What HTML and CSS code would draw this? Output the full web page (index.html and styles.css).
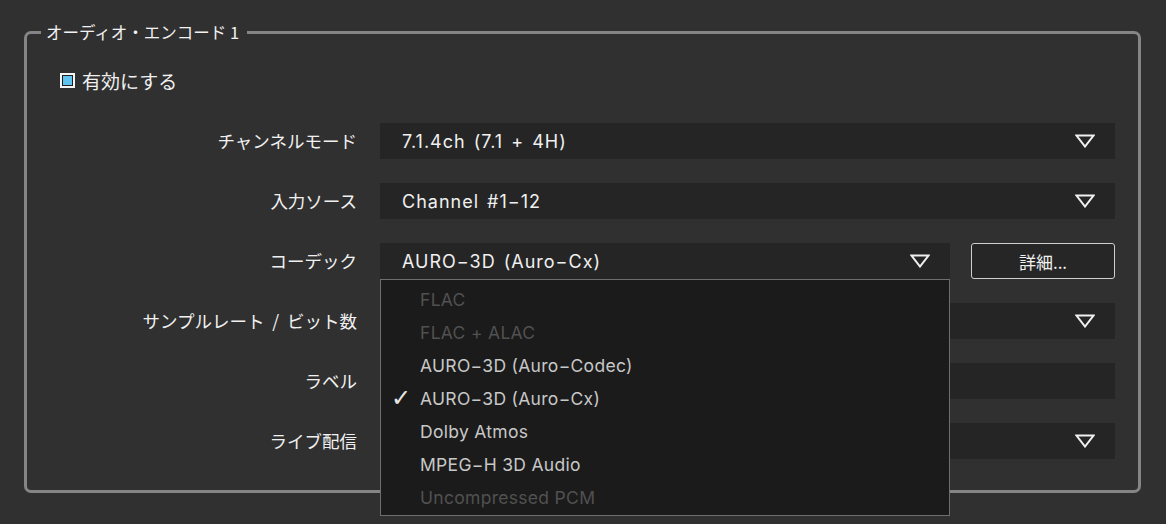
FILE: index.html
```html
<!DOCTYPE html>
<html lang="ja">
<head>
    <meta charset="UTF-8">
    <title>オーディオ・エンコード</title>
    <link rel="stylesheet" href="styles.css">
</head>
<body>
    <div class="group">
        <div class="legend">オーディオ・エンコード 1</div>

        <label class="enable">
            <span class="check"><span class="check-fill"></span></span>
            有効にする
        </label>

        <div class="form">
            <div class="label">チャンネルモード</div>
            <div class="select">
                <span class="value">7.1.4ch (7.1 + 4H)</span>
                <svg class="arrow" width="20" height="14" viewBox="0 0 20 14"><path d="M1.5 1.5 H18.5 L10 12.5 Z" fill="none" stroke="#f0f0f0" stroke-width="2"/></svg>
            </div>

            <div class="label">入力ソース</div>
            <div class="select">
                <span class="value">Channel #1−12</span>
                <svg class="arrow" width="20" height="14" viewBox="0 0 20 14"><path d="M1.5 1.5 H18.5 L10 12.5 Z" fill="none" stroke="#f0f0f0" stroke-width="2"/></svg>
            </div>

            <div class="label">コーデック</div>
            <div class="with-button">
                <div class="select open">
                    <span class="value">AURO−3D (Auro−Cx)</span>
                    <svg class="arrow" width="20" height="14" viewBox="0 0 20 14"><path d="M1.5 1.5 H18.5 L10 12.5 Z" fill="none" stroke="#f0f0f0" stroke-width="2"/></svg>
                    <ul class="dropdown">
                        <li class="disabled">FLAC</li>
                        <li class="disabled">FLAC + ALAC</li>
                        <li>AURO−3D (Auro−Codec)</li>
                        <li class="checked">AURO−3D (Auro−Cx)</li>
                        <li>Dolby Atmos</li>
                        <li>MPEG−H 3D Audio</li>
                        <li class="disabled">Uncompressed PCM</li>
                    </ul>
                </div>
                <button class="detail">詳細...</button>
            </div>

            <div class="label">サンプルレート &nbsp;/&nbsp; ビット数</div>
            <div class="select">
                <span></span>
                <svg class="arrow" width="20" height="14" viewBox="0 0 20 14"><path d="M1.5 1.5 H18.5 L10 12.5 Z" fill="none" stroke="#f0f0f0" stroke-width="2"/></svg>
            </div>

            <div class="label">ラベル</div>
            <div class="select text"></div>

            <div class="label">ライブ配信</div>
            <div class="select">
                <span></span>
                <svg class="arrow" width="20" height="14" viewBox="0 0 20 14"><path d="M1.5 1.5 H18.5 L10 12.5 Z" fill="none" stroke="#f0f0f0" stroke-width="2"/></svg>
            </div>
        </div>
    </div>
</body>
</html>
```

FILE: styles.css
```css
/* dark settings panel */
html {
    background-color: #303030;
}
body {
    margin: 0;
    padding: 31px 0 31px 24px;
    min-height: 524px;
    box-sizing: border-box;
    color: #f0f0f0;
    font-family: "Noto Sans CJK JP", "Noto Sans", sans-serif;
    font-size: 18px;
}
.group {
    position: relative;
    width: 1117px;
    height: 462px;
    box-sizing: border-box;
    padding: 0 23px 0 0;
    border: 3px solid #858585;
    border-radius: 7px;
}
.legend {
    position: absolute;
    top: -14px;
    left: 14px;
    padding: 0 8px 0 5px;
    background: #303030;
    font-size: 16.5px;
    line-height: 24px;
    color: #f2f2f2;
}
.enable {
    display: flex;
    align-items: center;
    gap: 7px;
    margin: 32px 0 0 33px;
    height: 28px;
    font-size: 19px;
}
.check {
    width: 15px;
    height: 15px;
    box-sizing: border-box;
    border: 2px solid #f5f5f5;
    padding: 1px;
    background: #1e1e1e;
}
.check-fill {
    display: block;
    width: 100%;
    height: 100%;
    background: #5ec3ef;
}
.form {
    display: grid;
    grid-template-columns: 330px 1fr;
    column-gap: 23px;
    row-gap: 24px;
    margin-top: 29px;
}
.label {
    text-align: right;
    line-height: 36px;
    height: 36px;
    white-space: nowrap;
    font-size: 17.5px;
}
.select {
    position: relative;
    height: 36px;
    background: #252525;
    display: flex;
    align-items: center;
    justify-content: space-between;
    padding: 0 20px 0 22px;
    font-family: Inter, "Noto Sans CJK JP", sans-serif;
    font-size: 18px;
    letter-spacing: 0.3px;
}
.select .value {
    letter-spacing: 1px;
    word-spacing: 2px;
}
.select.open {
    flex: 0 0 570px;
    box-sizing: border-box;
}
.arrow {
    display: block;
}
.with-button {
    display: flex;
    justify-content: space-between;
}
.detail {
    width: 144px;
    height: 36px;
    background: #262626;
    border: 1px solid #cfcfcf;
    border-radius: 3px;
    color: #f2f2f2;
    font-family: inherit;
    font-size: 17px;
    padding: 0;
}
.dropdown {
    position: absolute;
    top: 36px;
    left: 0;
    width: 570px;
    box-sizing: border-box;
    margin: 0;
    padding: 3px 0 0 0;
    height: 237px;
    list-style: none;
    background: #1b1b1b;
    border: 1px solid #6e6e6e;
    z-index: 2;
}
.dropdown li {
    position: relative;
    height: 33px;
    line-height: 33px;
    padding-left: 39px;
    color: #c8c8c8;
    font-size: 17.5px;
}
.dropdown li.disabled {
    color: #515151;
}
.dropdown li.checked::before {
    content: "✓";
    position: absolute;
    left: 10px;
    top: 0;
    font-family: "DejaVu Sans", sans-serif;
    font-size: 24px;
    font-weight: bold;
    color: #e8e8e8;
}
```
